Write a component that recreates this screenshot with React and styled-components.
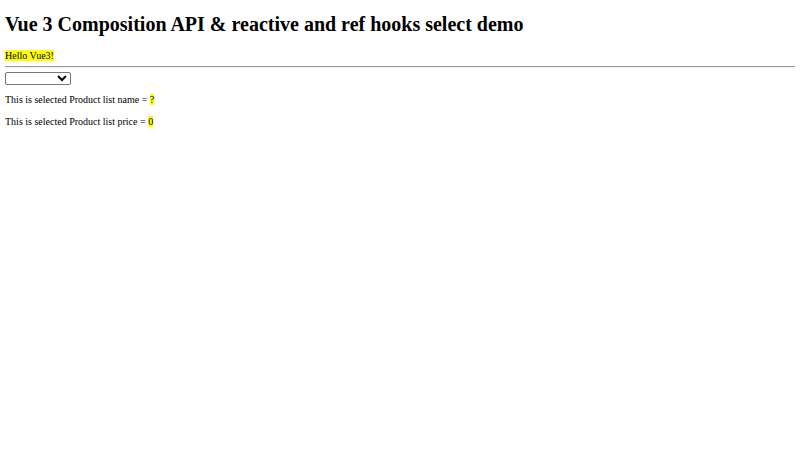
import { useState } from 'react';
import styled, { createGlobalStyle } from 'styled-components';

const GlobalStyle = createGlobalStyle`
  html, body {
    background: #ffffff;
  }
  body {
    margin: 5px;
    font-family: "Liberation Serif", "Times New Roman", serif;
    font-size: 10px;
    color: #000000;
  }
`;

const Title = styled.h1`
  font-size: 20px;
  font-weight: bold;
  margin: 8.4px 0 13.4px;
`;

const Highlight = styled.span`
  background-color: #ffff00;
`;

const Rule = styled.hr`
  margin: 5px 0 4px;
  border: none;
  border-top: 1px solid #9a9a9a;
  border-bottom: 1px solid #eeeeee;
`;

const Select = styled.select`
  display: block;
  width: 66px;
  height: 13px;
  font-size: 8px;
  font-family: "Liberation Sans", Arial, sans-serif;
  border: 1px solid #767676;
  border-radius: 2px;
  background: #ffffff;
  padding: 0;
`;

const Line = styled.p`
  margin: 9.5px 0 10.5px;
`;

const products = [
  { name: '', price: 0 },
  { name: 'Apple', price: 10 },
  { name: 'Banana', price: 5 },
];

const App = () => {
  const [selected, setSelected] = useState(null);

  return (
    <>
      <GlobalStyle />
      <Title>Vue 3 Composition API &amp; reactive and ref hooks select demo</Title>
      <div>
        <Highlight>Hello Vue3!</Highlight>
      </div>
      <Rule />
      <Select
        value={selected === null ? '' : selected}
        onChange={(e) => setSelected(e.target.value === '' ? null : Number(e.target.value))}
      >
        {products.map((p, i) => (
          <option key={i} value={i === 0 ? '' : i}>
            {p.name}
          </option>
        ))}
      </Select>
      <Line>
        This is selected Product list name = <Highlight>{selected ? products[selected].name : '?'}</Highlight>
      </Line>
      <Line>
        This is selected Product list price = <Highlight>{selected ? products[selected].price : 0}</Highlight>
      </Line>
    </>
  );
};

export default App;
